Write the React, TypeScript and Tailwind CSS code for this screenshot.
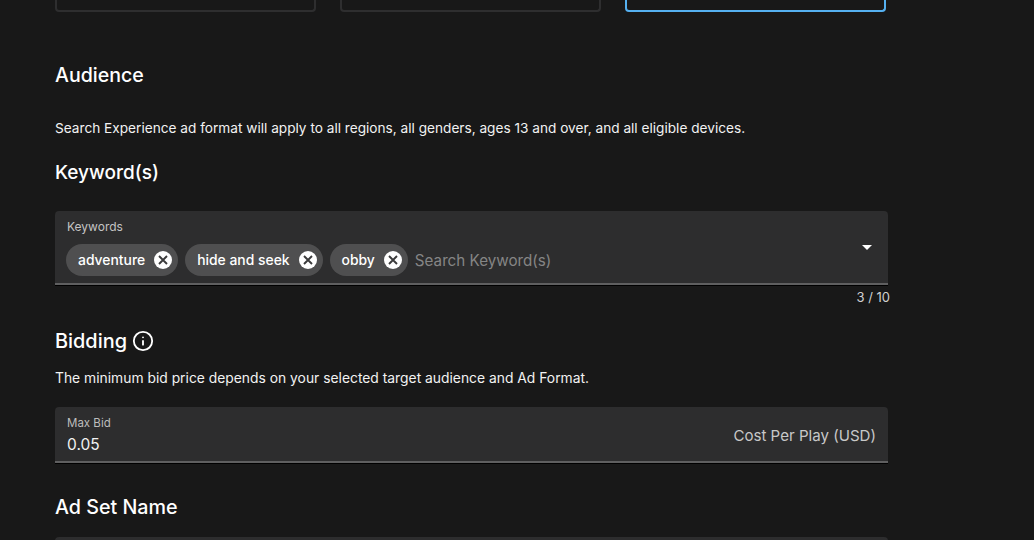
import { Info } from "lucide-react";

const keywords = ["adventure", "hide and seek", "obby"];

function Chip({ label }: { label: string }) {
  return (
    <div className="flex h-[32px] items-center rounded-full bg-[#4f4f50] pl-[12px] pr-[6px]">
      <span className="text-[13.9px] font-medium text-white">{label}</span>
      <span className="ml-[9px] flex h-[18px] w-[18px] items-center justify-center rounded-full bg-white">
        <svg viewBox="0 0 10 10" className="h-[10px] w-[10px]">
          <path d="M1 1L9 9M9 1L1 9" stroke="#3b3b3c" strokeWidth="1.9" fill="none" />
        </svg>
      </span>
    </div>
  );
}

export default function App() {
  return (
    <div
      className="h-[540px] w-[1034px] overflow-hidden bg-[#181818] pl-[55px] text-white"
      style={{ fontFamily: "Inter, 'Noto Sans', sans-serif" }}
    >
      <div className="flex w-[833px] gap-[24.5px]">
        <div className="h-[12px] w-[260.5px] rounded-b-[4px] border-x-2 border-b-2 border-[#2e2e2f]" />
        <div className="h-[12px] w-[260.5px] rounded-b-[4px] border-x-2 border-b-2 border-[#2e2e2f]" />
        <div className="h-[12px] w-[260.5px] rounded-b-[4px] border-x-2 border-b-2 border-[#55b0f0]" />
      </div>

      <h2 className="mt-[51px] text-[19.6px] leading-[24px] font-medium">Audience</h2>
      <p className="mt-[31px] text-[13.65px] leading-[20px] text-[#f2f2f2]">
        Search Experience ad format will apply to all regions, all genders, ages 13 and over, and all eligible devices.
      </p>
      <h2 className="mt-[23px] text-[19px] leading-[24px] font-medium">Keyword(s)</h2>

      <div className="mt-[26px] h-[74px] w-[833px] rounded-t-[4px] border-b-2 border-[#5f5f60] bg-[#2d2d2e] shadow-[0_1px_0_#000]">
        <div className="flex h-full">
          <div className="flex-1 pl-[11px]">
            <div className="pt-[8px] pl-[1px] text-[12px] leading-[16px] text-[#c4c4c4]">Keywords</div>
            <div className="mt-[9px] flex items-center gap-[7px]">
              {keywords.map((k) => (
                <Chip key={k} label={k} />
              ))}
              <span className="pt-[2px] text-[15.2px] text-[#858585]">Search Keyword(s)</span>
            </div>
          </div>
          <div className="pt-[34px] pr-[16px]">
            <div className="h-0 w-0 border-x-[5px] border-t-[5px] border-x-transparent border-t-white" />
          </div>
        </div>
      </div>
      <div className="mt-[3px] w-[835px] text-right text-[13px] leading-[18px] text-[#d0d0d0]">3 / 10</div>

      <div className="mt-[23px] flex items-center gap-[5px]">
        <h2 className="text-[19.9px] leading-[24px] font-medium">Bidding</h2>
        <Info className="h-[22px] w-[22px]" strokeWidth={2} />
      </div>
      <p className="mt-[15px] text-[13.85px] leading-[20px] text-[#f2f2f2]">
        The minimum bid price depends on your selected target audience and Ad Format.
      </p>

      <div className="mt-[19px] flex h-[56px] w-[833px] justify-between rounded-t-[4px] border-b-2 border-[#5f5f60] bg-[#2d2d2e] px-[12px] pt-[9px] shadow-[0_1px_0_#000]">
        <div>
          <div className="text-[11.5px] leading-[15px] text-[#bdbdbd]">Max Bid</div>
          <div className="mt-[4px] text-[15.5px] leading-[20px] text-[#f2f2f2]">0.05</div>
        </div>
        <div className="pt-[8px] text-[15.1px] leading-[24px] text-[#c8c8c8]">Cost Per Play (USD)</div>
      </div>

      <h2 className="mt-[32px] text-[19.7px] leading-[24px] font-medium">Ad Set Name</h2>
      <div className="mt-[18px] h-[20px] w-[833px] rounded-t-[4px] bg-[#2d2d2e]" />
    </div>
  );
}
